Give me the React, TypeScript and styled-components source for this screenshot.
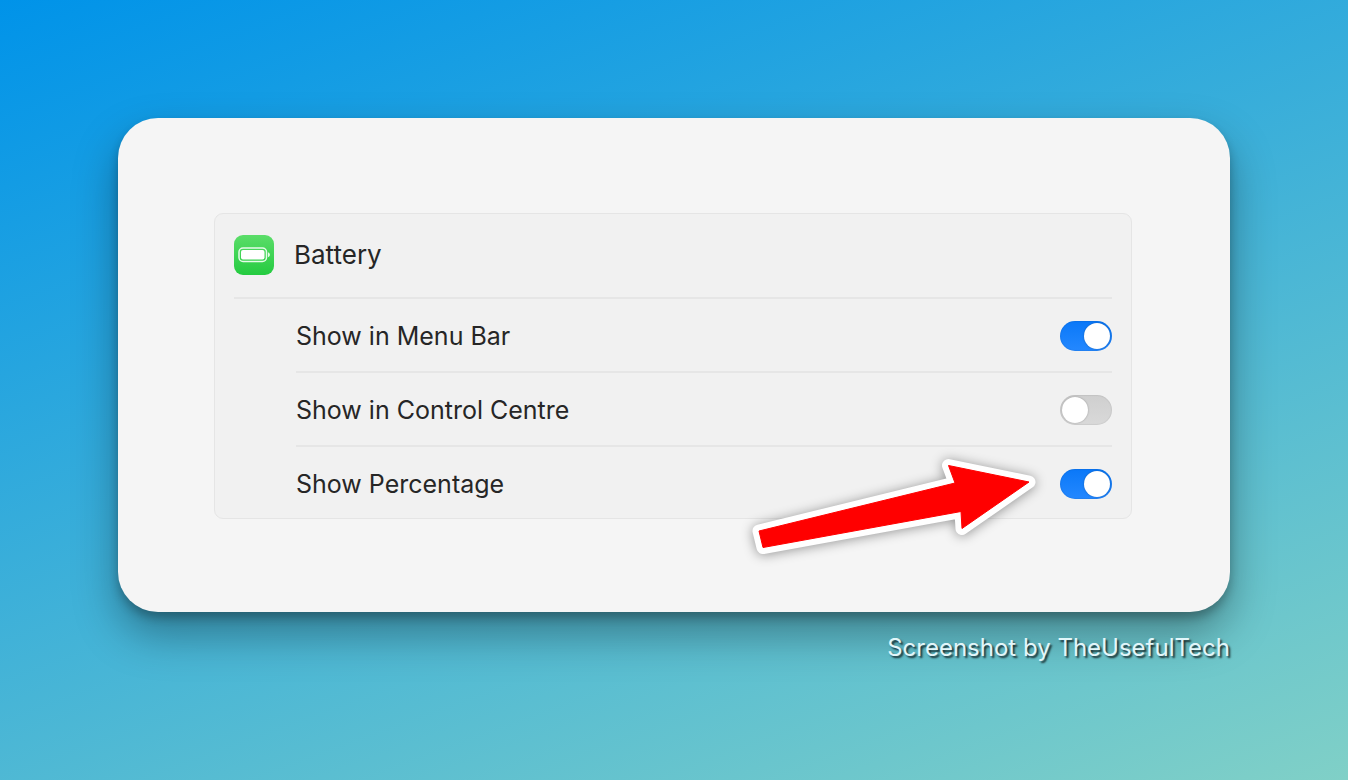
import React, { useState } from "react";
import styled, { createGlobalStyle } from "styled-components";

const GlobalStyle = createGlobalStyle`
  * { box-sizing: border-box; }
  body {
    margin: 0;
    font-family: Inter, "Liberation Sans", sans-serif;
    color: #262626;
  }
`;

const Page = styled.main`
  min-height: 100vh;
  padding: 118px 118px 100px;
  background: linear-gradient(160deg, #0093e9 0%, #80d0c7 100%);
`;

const Card = styled.section`
  padding: 95px 98px 93px 96px;
  border-radius: 40px;
  background: #f5f5f5;
  box-shadow: 0 22px 44px rgba(0, 0, 0, 0.34), 0 6px 10px rgba(0, 0, 0, 0.24);
`;

const Panel = styled.div`
  padding: 0 19px;
  border: 1px solid #e5e5e5;
  border-radius: 9px;
  background: #f1f1f1;
`;

const Header = styled.header`
  display: flex;
  align-items: center;
  gap: 20px;
  height: 85px;
  padding-bottom: 1px;
  border-bottom: 2px solid #e6e6e6;
`;

const Title = styled.h1`
  margin: 0;
  font-size: 26px;
  line-height: 32px;
  font-weight: 400;
`;

const Rows = styled.div`
  padding-left: 62px;
`;

const Row = styled.div`
  position: relative;
  display: flex;
  align-items: center;
  justify-content: space-between;
  height: 74px;
  padding-top: 2px;
  border-bottom: 2px solid #e6e6e6;

  &:last-child {
    height: 71px;
    padding-top: 3px;
    border-bottom: none;
  }
`;

const RowLabel = styled.label`
  font-size: 25px;
  line-height: 32px;
`;

const Switch = styled.input`
  appearance: none;
  display: flex;
  align-items: center;
  width: 52px;
  height: 30px;
  margin: 0;
  padding: 0 2px;
  border-radius: 15px;
  background: linear-gradient(#cfcfcf, #d9d9d9);
  box-shadow: inset 0 0 1px 1px rgba(0, 0, 0, 0.06);

  &::before {
    content: "";
    width: 26px;
    height: 26px;
    border-radius: 50%;
    background: #fff;
    box-shadow: 0 0 2px rgba(0, 0, 0, 0.3);
  }

  &:checked {
    justify-content: flex-end;
    background: linear-gradient(#0a78f8, #2488ff);
  }
`;

const Arrow = styled.svg`
  position: absolute;
  top: 8px;
  right: 67px;
  overflow: visible;
  pointer-events: none;
  filter: drop-shadow(0 1px 6px rgba(0, 0, 0, 0.4));
`;

const Credit = styled.p`
  margin: 20px 0 0;
  text-align: right;
  font-size: 24px;
  line-height: 32px;
  font-weight: 400;
  color: #e2f6fa;
  text-shadow: 2px 2px 2px rgba(0, 0, 0, 0.75);
`;

function BatteryIcon() {
  return (
    <svg width="40" height="40" viewBox="0 0 40 40" aria-hidden="true">
      <defs>
        <linearGradient id="battery-green" x1="0" y1="0" x2="0" y2="1">
          <stop offset="0" stopColor="#5bdd69" />
          <stop offset="1" stopColor="#24cb40" />
        </linearGradient>
      </defs>
      <rect width="40" height="40" rx="9" fill="url(#battery-green)" />
      <rect x="5" y="13" width="27.5" height="13.5" rx="4" fill="none" stroke="#e8fbea" strokeWidth="1.5" />
      <rect x="7" y="15" width="23.5" height="9.5" rx="2" fill="#fff" />
      <path d="M34 17.3c1.2.4 1.9 1.3 1.9 2.5s-.7 2.1-1.9 2.5z" fill="#e8fbea" />
    </svg>
  );
}

const arrowPath = "M14 76 210 28 203.500 10.500 284 27 217 73.500 216 56.500 18 92.500Z";

function PointerArrow() {
  return (
    <Arrow width="300" height="110" viewBox="0 0 300 110" aria-hidden="true">
      <path d={arrowPath} fill="#fff" stroke="#fff" strokeWidth="13" strokeLinejoin="round" />
      <path d={arrowPath} fill="#f00" stroke="#f00" strokeLinejoin="round" />
    </Arrow>
  );
}

const settings = [
  { id: "menu-bar", label: "Show in Menu Bar", on: true },
  { id: "control-centre", label: "Show in Control Centre", on: false },
  { id: "percentage", label: "Show Percentage", on: true, highlighted: true },
];

export default function App() {
  const [values, setValues] = useState<Record<string, boolean>>(
    Object.fromEntries(settings.map((s) => [s.id, s.on]))
  );

  return (
    <>
      <GlobalStyle />
      <Page>
        <Card>
          <Panel>
            <Header>
              <BatteryIcon />
              <Title>Battery</Title>
            </Header>
            <Rows>
              {settings.map((s) => (
                <Row key={s.id}>
                  <RowLabel htmlFor={s.id}>{s.label}</RowLabel>
                  <Switch
                    id={s.id}
                    type="checkbox"
                    role="switch"
                    checked={values[s.id]}
                    onChange={(e) => setValues({ ...values, [s.id]: e.target.checked })}
                  />
                  {s.highlighted && <PointerArrow />}
                </Row>
              ))}
            </Rows>
          </Panel>
        </Card>
        <Credit>Screenshot by TheUsefulTech</Credit>
      </Page>
    </>
  );
}
